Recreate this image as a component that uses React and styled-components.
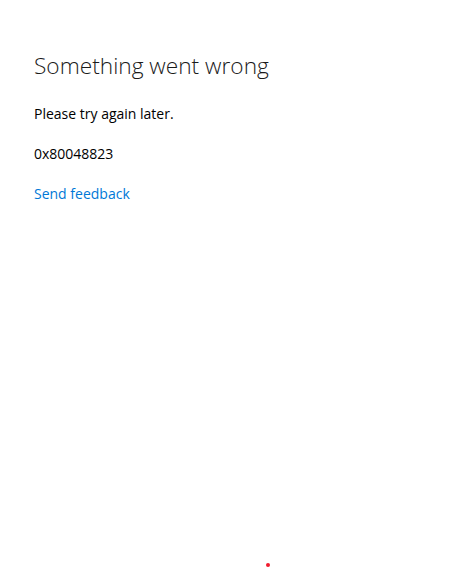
import React from 'react';
import styled, { createGlobalStyle } from 'styled-components';

const GlobalStyle = createGlobalStyle`
  html, body {
    margin: 0;
    padding: 0;
    background: #ffffff;
  }
  body {
    font-family: "Segoe UI", "Open Sans", "Noto Sans", sans-serif;
    color: #000000;
  }
`;

const Page = styled.div`
  position: relative;
  width: 473px;
  height: 569px;
  box-sizing: border-box;
  padding: 50px 34px 0;
`;

const Title = styled.h1`
  margin: 0;
  font-size: 22.7px;
  font-weight: 300;
  line-height: 32px;
  color: #1a1a1a;
`;

const Text = styled.p`
  margin: ${({ top }) => top}px 0 0;
  font-size: 14px;
  line-height: 20px;
  color: #000000;
`;

const Link = styled.a`
  display: block;
  margin-top: 20px;
  font-size: 14px;
  line-height: 20px;
  color: #0078d7;
  text-decoration: none;
  cursor: pointer;
`;

const Dot = styled.span`
  position: absolute;
  left: 266px;
  top: 563px;
  width: 4px;
  height: 4px;
  border-radius: 50%;
  background: #f01b2d;
`;

export default function App() {
  return (
    <>
      <GlobalStyle />
      <Page>
        <Title>Something went wrong</Title>
        <Text top={22}>Please try again later.</Text>
        <Text top={20}>0x80048823</Text>
        <Link>Send feedback</Link>
        <Dot />
      </Page>
    </>
  );
}
